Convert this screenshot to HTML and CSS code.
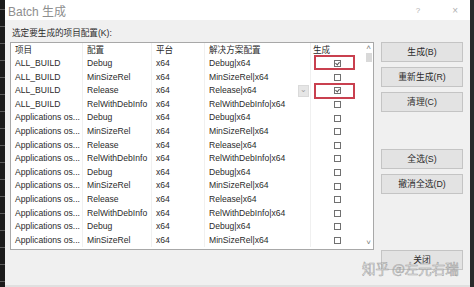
FILE: index.html
```html
<!doctype html>
<html>

<head>
    <meta charset="utf-8">
    <title>Batch 生成</title>
    <link rel="stylesheet" href="styles.css">
</head>

<body>
    <div class="edge-left"></div>

    <div class="dialog">
        <!-- Заголовок вікна -->
        <div class="titlebar">
            <span class="title">Batch 生成</span>
            <span class="tb-btn help">?</span>
            <span class="tb-btn close-x">×</span>
        </div>

        <div class="content">
            <div class="label">选定要生成的项目配置(K):</div>

            <div class="main">
                <!-- Список конфігурацій -->
                <div class="list">
                    <div class="rows">
                        <div class="row head">
                            <div class="cell">项目</div>
                            <div class="cell">配置</div>
                            <div class="cell">平台</div>
                            <div class="cell">解决方案配置</div>
                            <div class="cell">生成</div>
                        </div>
                        <div class="row">
                            <div class="cell">ALL_BUILD</div>
                            <div class="cell">Debug</div>
                            <div class="cell">x64</div>
                            <div class="cell">Debug|x64</div>
                            <div class="cell chk"><span class="box checked"></span></div>
                        </div>
                        <div class="row">
                            <div class="cell">ALL_BUILD</div>
                            <div class="cell">MinSizeRel</div>
                            <div class="cell">x64</div>
                            <div class="cell">MinSizeRel|x64</div>
                            <div class="cell chk"><span class="box"></span></div>
                        </div>
                        <div class="row">
                            <div class="cell">ALL_BUILD</div>
                            <div class="cell">Release</div>
                            <div class="cell">x64</div>
                            <div class="cell combo">Release|x64<span class="drop">⌄</span></div>
                            <div class="cell chk"><span class="box checked"></span></div>
                        </div>
                        <div class="row">
                            <div class="cell">ALL_BUILD</div>
                            <div class="cell">RelWithDebInfo</div>
                            <div class="cell">x64</div>
                            <div class="cell">RelWithDebInfo|x64</div>
                            <div class="cell chk"><span class="box"></span></div>
                        </div>
                        <div class="row">
                            <div class="cell">Applications os...</div>
                            <div class="cell">Debug</div>
                            <div class="cell">x64</div>
                            <div class="cell">Debug|x64</div>
                            <div class="cell chk"><span class="box"></span></div>
                        </div>
                        <div class="row">
                            <div class="cell">Applications os...</div>
                            <div class="cell">MinSizeRel</div>
                            <div class="cell">x64</div>
                            <div class="cell">MinSizeRel|x64</div>
                            <div class="cell chk"><span class="box"></span></div>
                        </div>
                        <div class="row">
                            <div class="cell">Applications os...</div>
                            <div class="cell">Release</div>
                            <div class="cell">x64</div>
                            <div class="cell">Release|x64</div>
                            <div class="cell chk"><span class="box"></span></div>
                        </div>
                        <div class="row">
                            <div class="cell">Applications os...</div>
                            <div class="cell">RelWithDebInfo</div>
                            <div class="cell">x64</div>
                            <div class="cell">RelWithDebInfo|x64</div>
                            <div class="cell chk"><span class="box"></span></div>
                        </div>
                        <div class="row">
                            <div class="cell">Applications os...</div>
                            <div class="cell">Debug</div>
                            <div class="cell">x64</div>
                            <div class="cell">Debug|x64</div>
                            <div class="cell chk"><span class="box"></span></div>
                        </div>
                        <div class="row">
                            <div class="cell">Applications os...</div>
                            <div class="cell">MinSizeRel</div>
                            <div class="cell">x64</div>
                            <div class="cell">MinSizeRel|x64</div>
                            <div class="cell chk"><span class="box"></span></div>
                        </div>
                        <div class="row">
                            <div class="cell">Applications os...</div>
                            <div class="cell">Release</div>
                            <div class="cell">x64</div>
                            <div class="cell">Release|x64</div>
                            <div class="cell chk"><span class="box"></span></div>
                        </div>
                        <div class="row">
                            <div class="cell">Applications os...</div>
                            <div class="cell">RelWithDebInfo</div>
                            <div class="cell">x64</div>
                            <div class="cell">RelWithDebInfo|x64</div>
                            <div class="cell chk"><span class="box"></span></div>
                        </div>
                        <div class="row">
                            <div class="cell">Applications os...</div>
                            <div class="cell">Debug</div>
                            <div class="cell">x64</div>
                            <div class="cell">Debug|x64</div>
                            <div class="cell chk"><span class="box"></span></div>
                        </div>
                        <div class="row">
                            <div class="cell">Applications os...</div>
                            <div class="cell">MinSizeRel</div>
                            <div class="cell">x64</div>
                            <div class="cell">MinSizeRel|x64</div>
                            <div class="cell chk"><span class="box"></span></div>
                        </div>
                    </div>

                    <!-- Смуга прокрутки -->
                    <div class="scrollbar">
                        <span class="arrow">˄</span>
                        <span class="thumb"></span>
                        <span class="arrow down">˅</span>
                    </div>

                    <!-- Червоні позначки поверх списку -->
                    <div class="mark mark-1"></div>
                    <div class="mark mark-2"></div>
                </div>

                <!-- Кнопки -->
                <div class="actions">
                    <div class="btn">生成(B)</div>
                    <div class="btn">重新生成(R)</div>
                    <div class="btn">清理(C)</div>
                    <div class="btn group">全选(S)</div>
                    <div class="btn">撤消全选(D)</div>
                    <div class="btn bottom">关闭</div>
                </div>
            </div>
        </div>

        <div class="watermark">知乎 @左元右瑞</div>
    </div>

    <div class="edge-right"></div>
</body>

</html>
```

FILE: styles.css
```css
body {
    margin: 0;
    width: 474px;
    height: 287px;
    overflow: hidden;
    display: flex;
    background-color: #1e1e1e;
    font-family: "Liberation Sans", "Noto Sans CJK SC", sans-serif;
    font-size: 8.6px;
    color: #2b2b2b;
}

.edge-left {
    width: 5px;
    background: repeating-linear-gradient(#1b1b1b 0 9px, #5a5a5a 9px 10px, #1b1b1b 10px 17px);
}

.edge-right {
    width: 4px;
    background-color: #2a2a2a;
}

.dialog {
    width: 465px;
    height: 285px;
    display: flex;
    flex-direction: column;
    position: relative;
    background-color: #f0f0f0;
    border-bottom: 2px solid #e0e0e0;
}

.titlebar {
    height: 20px;
    background-color: #fff;
    display: flex;
    align-items: center;
    padding-left: 3px;
}

.title {
    font-size: 12px;
    color: #8e8e8e;
    flex: 1;
}

.tb-btn {
    color: #b0b0b0;
    font-size: 8px;
}

.help {
    margin-right: 32px;
}

.close-x {
    font-size: 10px;
    margin-right: 12px;
}

.content {
    flex: 1;
    padding: 7px 0 0 5px;
}

.label {
    height: 12px;
    line-height: 12px;
    padding-left: 2px;
    margin-bottom: 3px;
}

.main {
    display: flex;
    gap: 7px;
    height: 236px;
}

.list {
    width: 362px;
    height: 206px;
    border: 1px solid #a8a8a8;
    background-color: #fff;
    display: flex;
    position: relative;
}

.rows {
    flex: 1;
}

.row {
    display: grid;
    grid-template-columns: 72px 69px 53px 106px 53px;
    height: 13.6px;
    line-height: 13.6px;
}

.row.head {
    height: 14px;
    line-height: 15px;
}

.cell {
    padding-left: 4px;
    border-right: 1px solid #f0f0f0;
    white-space: nowrap;
    overflow: hidden;
}

.row.head .cell:last-child {
    padding-left: 2px;
}

.cell:last-child {
    border-right: none;
}

.combo {
    display: flex;
    justify-content: space-between;
    align-items: center;
    padding-right: 1px;
}

.drop {
    width: 11px;
    height: 12px;
    line-height: 8px;
    text-align: center;
    background-color: #e6e6e6;
    border: 1px solid #dadada;
    color: #a0a0a0;
    font-size: 8px;
    box-sizing: border-box;
}

.chk {
    display: flex;
    justify-content: center;
    align-items: center;
    padding-left: 0;
}

.box {
    width: 5px;
    height: 5px;
    border: 1px solid #707070;
    background-color: #fff;
    position: relative;
}

.box.checked::after {
    content: "";
    position: absolute;
    left: 1px;
    top: 0;
    width: 2px;
    height: 3px;
    border-right: 1px solid #555;
    border-bottom: 1px solid #555;
    transform: rotate(40deg);
}

.scrollbar {
    width: 10px;
    display: flex;
    flex-direction: column;
    align-items: center;
    background-color: #fff;
    color: #777;
    font-size: 8px;
}

.arrow {
    height: 9px;
    line-height: 10px;
}

.arrow.down {
    margin-top: auto;
    line-height: 6px;
}

.thumb {
    width: 6px;
    height: 9px;
    background-color: #d9d9d9;
    margin-top: 1px;
}

.mark {
    position: absolute;
    left: 303px;
    width: 37px;
    border: 2px solid #c9404f;
}

.mark-1 {
    top: 12px;
    height: 11px;
}

.mark-2 {
    top: 40px;
    height: 12px;
}

.actions {
    width: 82px;
    display: flex;
    flex-direction: column;
}

.btn {
    height: 18px;
    line-height: 18px;
    text-align: center;
    background-color: #e3e3e3;
    border: 1px solid #c4c4c4;
    margin-bottom: 5px;
    font-size: 8.8px;
}

.btn.group {
    margin-top: 32px;
}

.btn.bottom {
    margin-top: auto;
    margin-bottom: 8px;
}

.watermark {
    position: absolute;
    left: 357px;
    top: 259px;
    font-size: 13.5px;
    line-height: 18px;
    color: rgba(255, 255, 255, 0.55);
    -webkit-text-stroke: 0.6px rgba(130, 130, 130, 0.7);
    font-family: "Noto Sans CJK SC", sans-serif;
    white-space: nowrap;
}
```
